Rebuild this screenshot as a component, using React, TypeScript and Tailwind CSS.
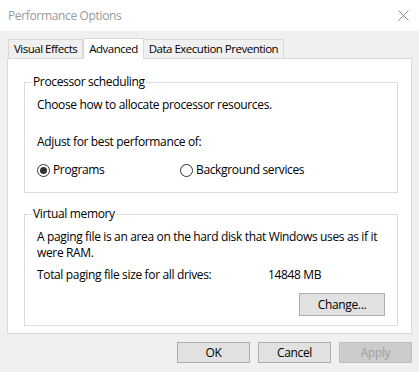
import React from 'react';

function Radio({ checked, label }: { checked?: boolean; label: string }) {
  return (
    <label className="flex items-center gap-[3px] h-[16px]">
      <span className="w-[13px] h-[13px] rounded-full border border-[#333333] bg-white flex items-center justify-center">
        {checked && <span className="w-[7px] h-[7px] rounded-full bg-[#333333]" />}
      </span>
      <span>{label}</span>
    </label>
  );
}

function Btn({ children, disabled }: { children: React.ReactNode; disabled?: boolean }) {
  return (
    <button
      className={
        disabled
          ? 'h-[21px] w-[73px] border border-[#bfbfbf] bg-[#cccccc] text-[#a0a0a0]'
          : 'h-[21px] w-[73px] border border-[#adadad] bg-[#e1e1e1] text-black'
      }
    >
      {children}
    </button>
  );
}

export default function App() {
  return (
    <div
      className="w-[419px] h-[372px] bg-[#f0f0f0] text-[12px] leading-[16px] tracking-[-0.35px] text-black overflow-hidden"
      style={{ fontFamily: '"Open Sans", "Noto Sans", sans-serif' }}
    >
      {/* title bar */}
      <div className="h-[31px] bg-white flex items-center justify-between pl-[8px] pr-[10px]">
        <span className="text-[#999999] text-[12px]">Performance Options</span>
        <svg width="11" height="11" viewBox="0 0 11 11" className="text-[#8a8a8a]">
          <path d="M0.5 0.5 L10.5 10.5 M10.5 0.5 L0.5 10.5" stroke="currentColor" strokeWidth="1" />
        </svg>
      </div>

      <div className="px-[7px]">
        {/* tabs */}
        <div className="flex items-end h-[27px] pl-[1px] text-[11.5px] tracking-[-0.5px]">
          <div className="h-[19px] px-[5px] border border-b-0 border-[#d9d9d9] bg-[#f0f0f0] flex items-center">
            Visual Effects
          </div>
          <div className="h-[21px] px-[5px] border border-b-0 border-[#d9d9d9] bg-white flex items-center relative -mb-px z-10">
            Advanced
          </div>
          <div className="h-[19px] px-[5px] border border-b-0 border-l-0 border-[#d9d9d9] bg-[#f0f0f0] flex items-center">
            Data Execution Prevention
          </div>
        </div>

        {/* panel */}
        <div className="h-[276px] border border-[#d9d9d9] bg-white pl-[16px] pr-[13px] pt-[15px]">
          <fieldset className="border border-[#dcdcdc] px-[12px] pb-[14px]">
            <legend className="ml-[-5px] px-[1px]">Processor scheduling</legend>
            <div className="pt-[7px]">Choose how to allocate processor resources.</div>
            <div className="mt-[21px]">Adjust for best performance of:</div>
            <div className="mt-[12px] flex">
              <div className="w-[143px]">
                <Radio checked label="Programs" />
              </div>
              <Radio label="Background services" />
            </div>
          </fieldset>

          <fieldset className="mt-[13px] border border-[#dcdcdc] pl-[12px] pr-[12px] pb-[9px]">
            <legend className="ml-[-5px] px-[1px]">Virtual memory</legend>
            <div className="pt-[7px]">
              A paging file is an area on the hard disk that Windows uses as if it were RAM.
            </div>
            <div className="mt-[6px] flex">
              <span className="w-[231px]">Total paging file size for all drives:</span>
              <span>14848 MB</span>
            </div>
            <div className="mt-[10px] flex justify-end">
              <button className="h-[23px] w-[86px] border border-[#adadad] bg-[#e1e1e1]">Change...</button>
            </div>
          </fieldset>
        </div>

        {/* bottom buttons */}
        <div className="mt-[8px] flex justify-end gap-[8px]">
          <Btn>OK</Btn>
          <Btn>Cancel</Btn>
          <Btn disabled>Apply</Btn>
        </div>
      </div>
    </div>
  );
}
